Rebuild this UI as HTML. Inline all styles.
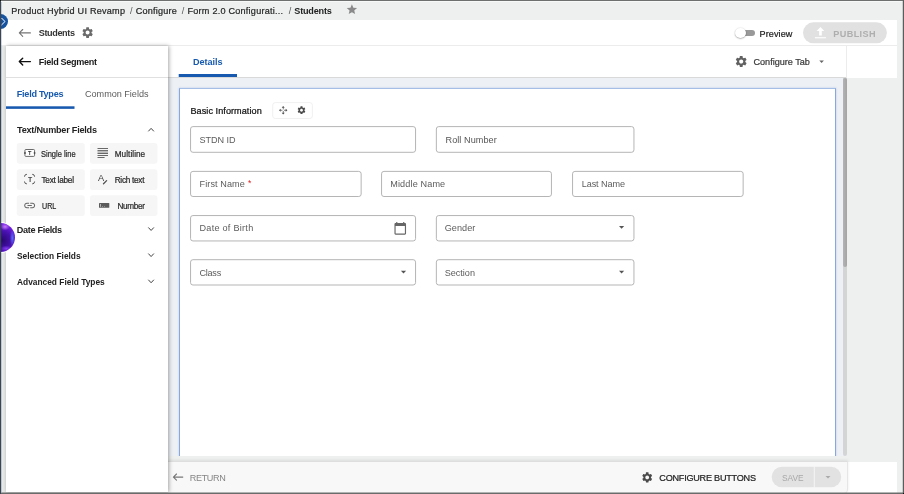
<!DOCTYPE html>
<html lang="en"><head><meta charset="utf-8"><title>Students - Form Configuration</title>
<style>
html,body{margin:0;padding:0}
body{width:904px;height:494px;overflow:hidden;position:relative;background:#eef0f0;font-family:"Liberation Sans",sans-serif}
.a{position:absolute;box-sizing:border-box}
.t{position:absolute;white-space:pre;line-height:0;font-family:"Liberation Sans",sans-serif}
svg{position:absolute;overflow:visible}
#txt{position:absolute;left:0;top:0;width:904px;height:494px;will-change:transform}

</style></head>
<body>
<!-- page chrome -->
<div class="a" id="crumbbar" style="left:0;top:0;width:904px;height:19.5px;background:#eef0f0"></div>
<div class="a" id="header" style="left:1px;top:19.5px;width:896px;height:26px;background:#fff;border-bottom:1px solid #ececec"></div>
<div class="a" id="tabbar" style="left:168px;top:45.5px;width:729.2px;height:32px;background:#fff"></div>
<div class="a" style="left:168px;top:77px;width:678.5px;height:0.8px;background:#d9d9d9"></div>
<div class="a" style="left:846px;top:46px;width:0.8px;height:31.5px;background:#ececec"></div>
<div class="a" id="leftstrip" style="left:1px;top:45.7px;width:5px;height:447px;background:#e8eaea"></div>

<div class="a" id="rightwhite" style="left:846.8px;top:461.5px;width:50.4px;height:31px;background:#fff"></div>
<!-- card -->
<div class="a" id="content" style="left:168px;top:77.7px;width:678.5px;height:378px;background:#edf0f5;overflow:hidden">
<div class="a" id="card" style="left:11.3px;top:10.6px;width:657.2px;height:380px;background:#fff;border:1px solid #86a8dc;border-top-color:#a4bee6;box-shadow:0 0 2px rgba(90,130,200,.35)"></div>
</div>
<!-- scrollbar -->
<div class="a" style="left:843px;top:77.7px;width:3.5px;height:378px;background:#d3d5d5;border-radius:0 0 2px 2px"></div>
<div class="a" style="left:843px;top:77.7px;width:3.5px;height:189px;background:linear-gradient(90deg,#b4b4b4,#a4a4a4);border-radius:2px"></div>
<!-- section title tools -->
<!-- inputs -->
<!-- footer -->
<div class="a" id="footer" style="left:168px;top:461.2px;width:679.6px;height:31.5px;background:#f8f8f8;border-top:1px solid #dedede;border-right:1px solid #e6e6e6;border-bottom-right-radius:4px;box-shadow:0 -1px 3px rgba(0,0,0,.08)"></div>
<!-- publish -->
<!-- toggle -->
<div class="a" style="left:740px;top:30px;width:14.7px;height:6px;background:#999;border-radius:3px"></div>
<div class="a" style="left:735.4px;top:28px;width:10.6px;height:10.4px;background:#fff;border-radius:50%;box-shadow:0 0.5px 1.5px rgba(0,0,0,.45)"></div>
<!-- left panel -->
<div class="a" id="leftpanel" style="left:5.8px;top:45.7px;width:162.2px;height:446.5px;background:#fff;box-shadow:1px 0 4px rgba(0,0,0,.35)"></div>
<!-- circles -->
<div class="a" style="left:-7.2px;top:13.8px;width:15.3px;height:15.3px;border-radius:50%;background:#1553a0"></div>
<div class="a" style="left:-15.2px;top:222px;width:31.4px;height:31.4px;border-radius:50%;background:#fff"></div>
<div class="a" style="left:-14px;top:223px;width:29.4px;height:29.4px;border-radius:50%;background:radial-gradient(ellipse 16% 12% at 66% 13%,rgba(215,140,255,.85) 0%,rgba(215,140,255,0) 100%),radial-gradient(ellipse 9% 30% at 91% 52%,rgba(90,110,255,.95) 0%,rgba(90,110,255,0) 100%),radial-gradient(ellipse 20% 10% at 70% 88%,rgba(150,70,255,.8) 0%,rgba(150,70,255,0) 100%),radial-gradient(circle at 56% 60%,#2a0870 0%,#4410aa 36%,#7420e4 68%,#8a2efa 100%)"></div>
<!-- frame -->
<div class="a" style="left:0;top:1px;width:904px;height:1px;background:#f7f8f8"></div>
<div class="a" style="left:0;top:0;width:904px;height:1px;background:#6e706f"></div>
<div class="a" style="left:0;top:492px;width:904px;height:1px;background:rgba(106,108,107,.5)"></div>
<div class="a" style="left:0;top:493px;width:904px;height:1px;background:#6a6c6b"></div>
<div class="a" style="left:1px;top:2px;width:1px;height:490px;background:rgba(58,69,85,.22)"></div>
<div class="a" style="left:0;top:1px;width:1px;height:493px;background:#3a4555"></div>
<div class="a" style="left:902px;top:1px;width:1px;height:492px;background:rgba(90,90,90,.22)"></div>
<div class="a" style="left:903px;top:0;width:1px;height:494px;background:#5c5c5c"></div>
<div class="a" style="left:0;top:0;width:1px;height:1px;background:#111"></div>
<div class="a" style="left:903px;top:493px;width:1px;height:1px;background:#111"></div>

<!-- icons -->
<svg id="ico" style="left:0;top:0" width="904" height="494" viewBox="0 0 904 494">
<rect x="5.8" y="77.05" width="162.2" height="0.8" fill="#d9d9d9"/>
<rect x="6" y="106.3" width="68.5" height="2.55" fill="#1759ae"/>
<rect x="178.7" y="74.0" width="58.3" height="3.0" fill="#1759ae"/>
<rect x="16.8" y="142.95" width="68.0" height="20.75" rx="2.6" fill="#f6f6f6"/>
<rect x="90.0" y="142.95" width="67.4" height="20.75" rx="2.6" fill="#f6f6f6"/>
<rect x="16.8" y="169.15" width="68.0" height="20.75" rx="2.6" fill="#f6f6f6"/>
<rect x="90.0" y="169.15" width="67.4" height="20.75" rx="2.6" fill="#f6f6f6"/>
<rect x="16.8" y="195.15" width="68.0" height="20.75" rx="2.6" fill="#f6f6f6"/>
<rect x="90.0" y="195.15" width="67.4" height="20.75" rx="2.6" fill="#f6f6f6"/>
<rect x="272.7" y="102.6" width="39.7" height="15.9" rx="2.6" fill="#fff" stroke="#ececec" stroke-width="0.8"/>
<rect x="803.0" y="22.35" width="83.9" height="21.0" rx="10.5" fill="#e1e1e1"/>
<rect x="771.7" y="466.7" width="69.5" height="20.5" rx="10.25" fill="#e2e2e2"/>
<rect x="813.8" y="466.5" width="0.9" height="21" fill="#f8f8f8"/>
<rect x="190.55" y="126.60" width="225.00" height="25.70" rx="2.4" fill="#fff" stroke="#adadad" stroke-width="0.9"/>
<rect x="436.35" y="126.60" width="197.60" height="25.70" rx="2.4" fill="#fff" stroke="#adadad" stroke-width="0.9"/>
<rect x="190.55" y="171.40" width="170.60" height="25.10" rx="2.4" fill="#fff" stroke="#adadad" stroke-width="0.9"/>
<rect x="381.55" y="171.40" width="169.90" height="25.10" rx="2.4" fill="#fff" stroke="#adadad" stroke-width="0.9"/>
<rect x="572.55" y="171.40" width="170.60" height="25.10" rx="2.4" fill="#fff" stroke="#adadad" stroke-width="0.9"/>
<rect x="190.55" y="215.55" width="225.00" height="25.40" rx="2.4" fill="#fff" stroke="#adadad" stroke-width="0.9"/>
<rect x="436.35" y="215.55" width="197.60" height="25.40" rx="2.4" fill="#fff" stroke="#adadad" stroke-width="0.9"/>
<rect x="190.55" y="259.70" width="225.00" height="25.30" rx="2.4" fill="#fff" stroke="#adadad" stroke-width="0.9"/>
<rect x="436.35" y="259.70" width="197.60" height="25.30" rx="2.4" fill="#fff" stroke="#adadad" stroke-width="0.9"/>
<g transform="translate(345.70 3.25) scale(0.5167)"><path d="M12 17.27L18.18 21l-1.64-7.03L22 9.24l-7.19-.61L12 2 9.19 8.63 2 9.24l5.46 4.73L5.82 21z" fill="#8a8a8a" /></g>
<path d="M30.4 32.9H19.6M22.7 29.5L19.3 32.9L22.7 36.3" fill="none" stroke="#747474" stroke-width="1.1" stroke-linecap="round" stroke-linejoin="round"/>
<g transform="translate(81.00 26.00) scale(0.5500)"><path d="M19.14 12.94c.04-.3.06-.61.06-.94 0-.32-.02-.64-.07-.94l2.03-1.58c.18-.14.23-.41.12-.61l-1.92-3.32c-.12-.22-.37-.29-.59-.22l-2.39.96c-.5-.38-1.03-.7-1.62-.94l-.36-2.54c-.04-.24-.24-.41-.48-.41h-3.84c-.24 0-.43.17-.47.41l-.36 2.54c-.59.24-1.13.57-1.62.94l-2.39-.96c-.22-.08-.47 0-.59.22L2.74 8.87c-.12.21-.08.47.12.61l2.03 1.58c-.05.3-.09.63-.09.94s.02.64.07.94l-2.03 1.58c-.18.14-.23.41-.12.61l1.92 3.32c.12.22.37.29.59.22l2.39-.96c.5.38 1.03.7 1.62.94l.36 2.54c.05.24.24.41.48.41h3.84c.24 0 .44-.17.47-.41l.36-2.54c.59-.24 1.13-.56 1.62-.94l2.39.96c.22.08.47 0 .59-.22l1.92-3.32c.12-.22.07-.47-.12-.61l-2.01-1.58zM12 15.6c-1.98 0-3.6-1.62-3.6-3.6s1.62-3.6 3.6-3.6 3.6 1.62 3.6 3.6-1.62 3.6-3.6 3.6z" fill="#6a6a6a" /></g>
<path d="M30.4 61.6H19.6M22.7 58.2L19.3 61.6L22.7 65.0" fill="none" stroke="#111" stroke-width="1.4" stroke-linecap="round" stroke-linejoin="round"/>
<path d="M148.60 131.05L151.10 128.35L153.60 131.05" fill="none" stroke="#444" stroke-width="1.0" stroke-linecap="round" stroke-linejoin="round"/>
<path d="M148.60 227.75L151.10 230.45L153.60 227.75" fill="none" stroke="#444" stroke-width="1.0" stroke-linecap="round" stroke-linejoin="round"/>
<path d="M148.60 253.85L151.10 256.55L153.60 253.85" fill="none" stroke="#444" stroke-width="1.0" stroke-linecap="round" stroke-linejoin="round"/>
<path d="M148.60 280.05L151.10 282.75L153.60 280.05" fill="none" stroke="#444" stroke-width="1.0" stroke-linecap="round" stroke-linejoin="round"/>
<g transform="translate(734.30 54.65) scale(0.5750)"><path d="M19.14 12.94c.04-.3.06-.61.06-.94 0-.32-.02-.64-.07-.94l2.03-1.58c.18-.14.23-.41.12-.61l-1.92-3.32c-.12-.22-.37-.29-.59-.22l-2.39.96c-.5-.38-1.03-.7-1.62-.94l-.36-2.54c-.04-.24-.24-.41-.48-.41h-3.84c-.24 0-.43.17-.47.41l-.36 2.54c-.59.24-1.13.57-1.62.94l-2.39-.96c-.22-.08-.47 0-.59.22L2.74 8.87c-.12.21-.08.47.12.61l2.03 1.58c-.05.3-.09.63-.09.94s.02.64.07.94l-2.03 1.58c-.18.14-.23.41-.12.61l1.92 3.32c.12.22.37.29.59.22l2.39-.96c.5.38 1.03.7 1.62.94l.36 2.54c.05.24.24.41.48.41h3.84c.24 0 .44-.17.47-.41l.36-2.54c.59-.24 1.13-.56 1.62-.94l2.39.96c.22.08.47 0 .59-.22l1.92-3.32c.12-.22.07-.47-.12-.61l-2.01-1.58zM12 15.6c-1.98 0-3.6-1.62-3.6-3.6s1.62-3.6 3.6-3.6 3.6 1.62 3.6 3.6-1.62 3.6-3.6 3.6z" fill="#616161" /></g>
<path d="M819.30 60.60h4.6l-2.30 2.4z" fill="#666"/>
<g transform="translate(296.65 105.35) scale(0.4042)"><path d="M19.14 12.94c.04-.3.06-.61.06-.94 0-.32-.02-.64-.07-.94l2.03-1.58c.18-.14.23-.41.12-.61l-1.92-3.32c-.12-.22-.37-.29-.59-.22l-2.39.96c-.5-.38-1.03-.7-1.62-.94l-.36-2.54c-.04-.24-.24-.41-.48-.41h-3.84c-.24 0-.43.17-.47.41l-.36 2.54c-.59.24-1.13.57-1.62.94l-2.39-.96c-.22-.08-.47 0-.59.22L2.74 8.87c-.12.21-.08.47.12.61l2.03 1.58c-.05.3-.09.63-.09.94s.02.64.07.94l-2.03 1.58c-.18.14-.23.41-.12.61l1.92 3.32c.12.22.37.29.59.22l2.39-.96c.5.38 1.03.7 1.62.94l.36 2.54c.05.24.24.41.48.41h3.84c.24 0 .44-.17.47-.41l.36-2.54c.59-.24 1.13-.56 1.62-.94l2.39.96c.22.08.47 0 .59-.22l1.92-3.32c.12-.22.07-.47-.12-.61l-2.01-1.58zM12 15.6c-1.98 0-3.6-1.62-3.6-3.6s1.62-3.6 3.6-3.6 3.6 1.62 3.6 3.6-1.62 3.6-3.6 3.6z" fill="#4a4a4a" /></g>
<g fill="#4a4a4a">
<path d="M283.2 106.0l1.5 1.7h-3z"/><path d="M283.2 114.4l1.5-1.7h-3z"/>
<path d="M279.0 110.2l1.7-1.5v3z"/><path d="M287.4 110.2l-1.7-1.5v3z"/>
<rect x="282.85" y="107.4" width="0.7" height="2.0"/><rect x="282.85" y="111.0" width="0.7" height="2.0"/>
<rect x="280.4" y="109.85" width="2.0" height="0.7"/><rect x="284.0" y="109.85" width="2.0" height="0.7"/>
</g>
<g transform="translate(393.30 221.35) scale(0.5792)"><path d="M20 3h-1V1h-2v2H7V1H5v2H4c-1.1 0-2 .9-2 2v16c0 1.1.9 2 2 2h16c1.1 0 2-.9 2-2V5c0-1.1-.9-2-2-2zm0 18H4V8h16v13z" fill="#666" /></g>
<path d="M619.00 225.95h5.2l-2.60 2.7z" fill="#555"/>
<path d="M400.90 270.75h5.2l-2.60 2.7z" fill="#555"/>
<path d="M619.00 270.75h5.2l-2.60 2.7z" fill="#555"/>
<g fill="#fff">
<path d="M820.45 27.0L824.3 31.1H821.8V35.6H819.1V31.1H816.6z"/><rect x="814.9" y="37.2" width="11" height="1.1"/></g>
<path d="M182.8 477.1H173.70000000000002M176.5 474.0L173.4 477.1L176.5 480.20000000000005" fill="none" stroke="#777" stroke-width="1.1" stroke-linecap="round" stroke-linejoin="round"/>
<g transform="translate(640.90 471.10) scale(0.5250)"><path d="M19.14 12.94c.04-.3.06-.61.06-.94 0-.32-.02-.64-.07-.94l2.03-1.58c.18-.14.23-.41.12-.61l-1.92-3.32c-.12-.22-.37-.29-.59-.22l-2.39.96c-.5-.38-1.03-.7-1.62-.94l-.36-2.54c-.04-.24-.24-.41-.48-.41h-3.84c-.24 0-.43.17-.47.41l-.36 2.54c-.59.24-1.13.57-1.62.94l-2.39-.96c-.22-.08-.47 0-.59.22L2.74 8.87c-.12.21-.08.47.12.61l2.03 1.58c-.05.3-.09.63-.09.94s.02.64.07.94l-2.03 1.58c-.18.14-.23.41-.12.61l1.92 3.32c.12.22.37.29.59.22l2.39-.96c.5.38 1.03.7 1.62.94l.36 2.54c.05.24.24.41.48.41h3.84c.24 0 .44-.17.47-.41l.36-2.54c.59-.24 1.13-.56 1.62-.94l2.39.96c.22.08.47 0 .59-.22l1.92-3.32c.12-.22.07-.47-.12-.61l-2.01-1.58zM12 15.6c-1.98 0-3.6-1.62-3.6-3.6s1.62-3.6 3.6-3.6 3.6 1.62 3.6 3.6-1.62 3.6-3.6 3.6z" fill="#4a4a4a" /></g>
<path d="M825.50 475.95h5.0l-2.50 2.5z" fill="#aaa"/>
<path d="M1.8 18.3L5.0 21.5L1.8 24.7" fill="none" stroke="#fff" stroke-width="1.0" stroke-linecap="round" stroke-linejoin="round"/>

<rect x="24.95" y="149.5" width="9.6" height="6.9" rx="0.9" fill="#fff" stroke="#505050" stroke-width="0.85"/>
<rect x="24.2" y="152.1" width="1.5" height="1.8" rx="0.5" fill="#505050"/><rect x="33.8" y="152.1" width="1.5" height="1.8" rx="0.5" fill="#505050"/>
<g fill="#505050">
<rect x="97.5" y="148.0" width="10.5" height="0.85"/><rect x="97.5" y="150.2" width="10.5" height="0.85"/>
<rect x="97.5" y="151.0" width="10.5" height="2.1" fill="#bdbdbd"/>
<rect x="97.5" y="153.0" width="10.5" height="0.85"/><rect x="97.5" y="155.1" width="10.5" height="0.85"/><rect x="97.5" y="157.15" width="7.1" height="0.85"/>
</g>
<g fill="none" stroke="#505050" stroke-width="0.95" stroke-linecap="round">
<path d="M24.5 176.3Q24.5 174.3 26.5 174.3"/><path d="M32.6 174.3Q34.6 174.3 34.6 176.3"/>
<path d="M24.5 181.9Q24.5 183.9 26.5 183.9"/><path d="M32.6 183.9Q34.6 183.9 34.6 181.9"/>
</g>
<path d="M103.5 183.8L106.6 180.6" stroke="#505050" stroke-width="1.3" stroke-linecap="round"/>
<rect x="99" y="202.9" width="10.3" height="4.95" rx="0.6" fill="#5a5a5a"/>
<rect x="100.2" y="204.0" width="0.7" height="2.8" fill="#ddd"/><rect x="102.2" y="206.0" width="0.7" height="0.7" fill="#ccc"/><rect x="104.2" y="206.0" width="0.7" height="0.7" fill="#bbb"/>

<g transform="translate(23.10 198.95) scale(0.5458)"><path d="M3.9 12c0-1.71 1.39-3.1 3.1-3.1h4V7H7c-2.76 0-5 2.24-5 5s2.24 5 5 5h4v-1.9H7c-1.71 0-3.1-1.39-3.1-3.1zM8 13h8v-2H8v2zm9-6h-4v1.9h4c1.71 0 3.1 1.39 3.1 3.1s-1.39 3.1-3.1 3.1h-4V17h4c2.76 0 5-2.24 5-5s-2.24-5-5-5z" fill="#666" /></g>
</svg>
<!-- text -->
<div id="txt">
<nav aria-label="Breadcrumb">
<span class="t" style="left:11.3px;top:11.05px;font-size:9.1px;-webkit-text-stroke:0.22px #262626;color:#262626;letter-spacing:0.241px">Product Hybrid UI Revamp</span>
<span class="t" style="left:130.0px;top:11.05px;font-size:9.1px;color:#555;letter-spacing:0.000px">/</span>
<span class="t" style="left:135.8px;top:11.05px;font-size:9.1px;-webkit-text-stroke:0.22px #262626;color:#262626;letter-spacing:0.195px">Configure</span>
<span class="t" style="left:181.8px;top:11.05px;font-size:9.1px;color:#555;letter-spacing:0.000px">/</span>
<span class="t" style="left:187.5px;top:11.05px;font-size:9.1px;-webkit-text-stroke:0.22px #262626;color:#262626;letter-spacing:0.229px">Form 2.0 Configurati...</span>
<span class="t" style="left:288.8px;top:11.05px;font-size:9.1px;color:#555;letter-spacing:0.000px">/</span>
<span class="t" style="left:294.3px;top:11.05px;font-size:9.1px;font-weight:700;color:#222;letter-spacing:-0.201px">Students</span>
</nav>
<header>
<span class="t" style="left:38.8px;top:33.35px;font-size:9.1px;font-weight:700;color:#333;letter-spacing:-0.387px">Students</span>
<span class="t" style="left:759.6px;top:33.55px;font-size:9.1px;-webkit-text-stroke:0.22px #222;color:#222;letter-spacing:0.076px">Preview</span>
<span class="t" style="left:833.2px;top:33.55px;font-size:9.1px;font-weight:700;color:#aeaeae;letter-spacing:0.413px">PUBLISH</span>
</header>
<aside aria-label="Field Segment">
<span class="t" style="left:38.8px;top:61.85px;font-size:9.1px;font-weight:700;color:#1a1a1a;letter-spacing:-0.330px">Field Segment</span>
<span class="t" style="left:16.8px;top:93.55px;font-size:9.1px;font-weight:700;color:#1759ae;letter-spacing:-0.266px">Field Types</span>
<span class="t" style="left:85.0px;top:93.55px;font-size:9.1px;color:#5c5c5c;letter-spacing:-0.016px">Common Fields</span>
<span class="t" style="left:17.0px;top:130.05px;font-size:9.1px;font-weight:700;color:#222;letter-spacing:-0.219px">Text/Number Fields</span>
<span class="t" style="left:41.2px;top:154.86px;font-size:8.2px;-webkit-text-stroke:0.22px #2a2a2a;color:#2a2a2a;transform:scaleX(0.9158);transform-origin:0 0">Single line</span>
<span class="t" style="left:114.7px;top:154.86px;font-size:8.2px;-webkit-text-stroke:0.22px #2a2a2a;color:#2a2a2a;letter-spacing:0.057px">Multiline</span>
<span class="t" style="left:41.5px;top:180.86px;font-size:8.2px;-webkit-text-stroke:0.22px #2a2a2a;color:#2a2a2a;letter-spacing:-0.233px">Text label</span>
<span class="t" style="left:114.7px;top:180.86px;font-size:8.2px;-webkit-text-stroke:0.22px #2a2a2a;color:#2a2a2a;letter-spacing:-0.257px">Rich text</span>
<span class="t" style="left:41.7px;top:206.86px;font-size:8.2px;-webkit-text-stroke:0.22px #2a2a2a;color:#2a2a2a;transform:scaleX(0.8724);transform-origin:0 0">URL</span>
<span class="t" style="left:117.5px;top:206.86px;font-size:8.2px;-webkit-text-stroke:0.22px #2a2a2a;color:#2a2a2a;letter-spacing:-0.325px">Number</span>
<span class="t" style="left:16.7px;top:229.55px;font-size:9.1px;font-weight:700;color:#222;letter-spacing:-0.302px">Date Fields</span>
<span class="t" style="left:16.7px;top:256.45px;font-size:9.1px;font-weight:700;color:#222;transform:scaleX(0.9186);transform-origin:0 0">Selection Fields</span>
<span class="t" style="left:17.0px;top:282.45px;font-size:9.1px;font-weight:700;color:#222;transform:scaleX(0.9198);transform-origin:0 0">Advanced Field Types</span>
<span class="t" style="left:27.9px;top:152.96px;font-size:5.6px;font-weight:700;color:#333;letter-spacing:0.000px">T</span>
<span class="t" style="left:27.9px;top:180.31px;font-size:6.9px;font-weight:700;color:#444;letter-spacing:0.000px">T</span>
<span class="t" style="left:98.0px;top:178.41px;font-size:9.2px;color:#3a3a3a;letter-spacing:0.000px">A</span>
</aside>
<main>
<span class="t" style="left:193.0px;top:62.05px;font-size:9.1px;font-weight:700;color:#1759ae;letter-spacing:-0.055px">Details</span>
<span class="t" style="left:753.5px;top:61.95px;font-size:9.1px;-webkit-text-stroke:0.22px #3a3a3a;color:#3a3a3a;letter-spacing:-0.006px">Configure Tab</span>
<span class="t" style="left:190.5px;top:111.05px;font-size:9.1px;-webkit-text-stroke:0.22px #111;color:#111;letter-spacing:0.058px">Basic Information</span>
<span class="t" style="left:199.5px;top:139.55px;font-size:9.1px;color:#5c5c5c;letter-spacing:-0.062px">STDN ID</span>
<span class="t" style="left:445.5px;top:139.55px;font-size:9.1px;color:#555;letter-spacing:0.065px">Roll Number</span>
<span class="t" style="left:199.6px;top:183.85px;font-size:9.1px;color:#5c5c5c;letter-spacing:0.081px">First Name</span>
<span class="t" style="left:248.1px;top:183.05px;font-size:8.5px;color:#e02020;letter-spacing:0.000px">*</span>
<span class="t" style="left:390.2px;top:183.85px;font-size:9.1px;color:#5c5c5c;letter-spacing:0.142px">Middle Name</span>
<span class="t" style="left:581.7px;top:183.85px;font-size:9.1px;color:#5c5c5c;letter-spacing:-0.086px">Last Name</span>
<span class="t" style="left:199.5px;top:228.05px;font-size:9.1px;color:#5c5c5c;letter-spacing:0.263px">Date of Birth</span>
<span class="t" style="left:444.7px;top:228.05px;font-size:9.1px;color:#5c5c5c;letter-spacing:0.071px">Gender</span>
<span class="t" style="left:199.5px;top:272.55px;font-size:9.1px;color:#5c5c5c;letter-spacing:-0.263px">Class</span>
<span class="t" style="left:444.7px;top:272.55px;font-size:9.1px;color:#5c5c5c;letter-spacing:-0.007px">Section</span>
</main>
<footer>
<span class="t" style="left:189.8px;top:477.95px;font-size:9.1px;color:#858585;letter-spacing:-0.398px">RETURN</span>
<span class="t" style="left:659.3px;top:477.85px;font-size:9.1px;-webkit-text-stroke:0.22px #222;color:#222;letter-spacing:-0.230px">CONFIGURE BUTTONS</span>
<span class="t" style="left:782.1px;top:477.85px;font-size:9.1px;color:#a8a8a8;transform:scaleX(0.9197);transform-origin:0 0">SAVE</span>
</footer>
</div>
</body></html>
